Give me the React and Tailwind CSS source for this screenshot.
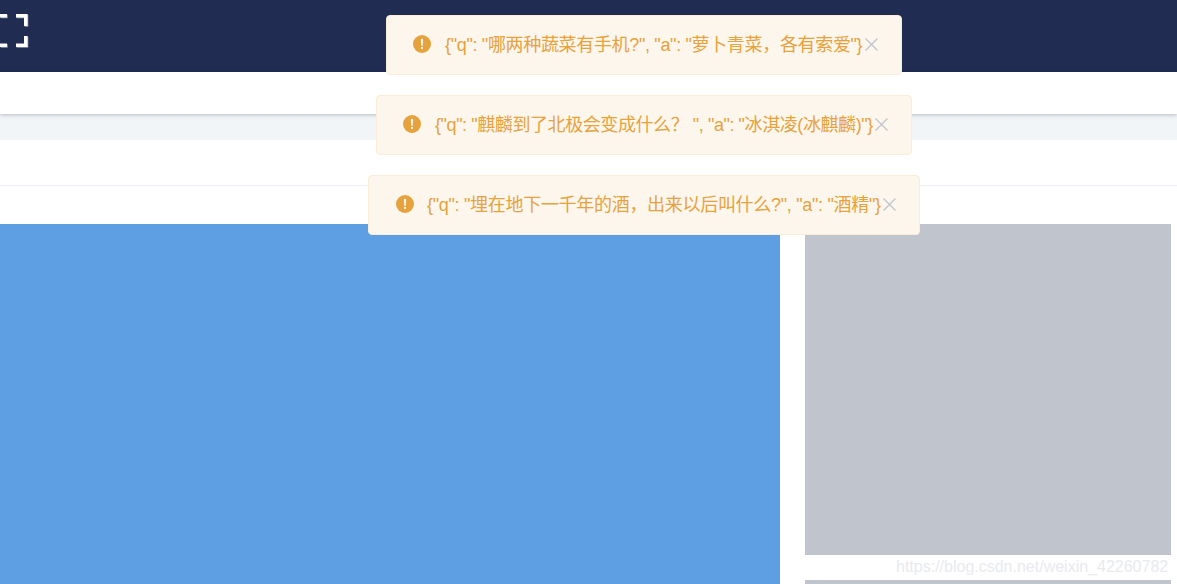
const STACK = "font-['Liberation_Sans','Noto_Sans_CJK_SC',sans-serif]";

function Warn() {
  return (
    <svg viewBox="0 0 18 18" className="w-[18px] h-[18px] shrink-0 mb-[2px]">
      <circle cx="9" cy="9" r="9" fill="#e6a23c" />
      <path d="M7.8 5 a1.2 1.2 0 0 1 2.4 0 L9.7 10.4 a0.7 0.7 0 0 1 -1.4 0 Z" fill="#fdf6ec" />
      <circle cx="9" cy="13" r="1.15" fill="#fdf6ec" />
    </svg>
  );
}

function Close() {
  return (
    <svg viewBox="0 0 13 13" className="w-[13px] h-[13px] shrink-0 mb-[1px]">
      <path d="M0.5 0.5 L12.5 12.5 M12.5 0.5 L0.5 12.5" stroke="#c0c4cc" strokeWidth="1.3" fill="none" />
    </svg>
  );
}

function Toast({ box, track, text }) {
  return (
    <div className={`absolute flex items-center h-[60px] bg-[#fdf6ec] border border-[#faecd8] rounded-[4px] pr-[23px] ${box}`}>
      <Warn />
      <span className={`text-[#e6a23c] text-[18px] whitespace-pre ${track}`}>{text}</span>
      <span className="ml-auto flex"><Close /></span>
    </div>
  );
}

export default function App() {
  return (
    <div className={`relative w-full h-[584px] overflow-hidden bg-white ${STACK}`}>
      <header className="h-[72px] bg-[#202c52] flex items-start pt-[14px]">
        <svg viewBox="0 0 29 34" className="w-[29px] h-[34px]">
          <path d="M0 1.8 H7 M0 31.2 H7 M16 1.8 H25.8 V12 M16 31.2 H25.8 V22" stroke="#8f95a8" strokeWidth="3.6" fill="none" transform="translate(0.7 0.7)" />
          <path d="M0 1.8 H7 M0 31.2 H7 M16 1.8 H25.8 V12 M16 31.2 H25.8 V22" stroke="#fff" strokeWidth="3.6" fill="none" />
        </svg>
      </header>
      <div className="relative h-[42px] bg-white shadow-[0_1px_4px_rgba(0,21,41,0.25)]" />
      <div className="h-[26px] bg-[#f2f5f8]" />
      <div className="h-[46px] bg-white border-b border-[#ebeef5]" />
      <div className="h-[38px] bg-white" />
      <div className="flex gap-[25px]">
        <div className="w-[780px] h-[360px] bg-[#5e9fe3]" />
        <div className="w-[366px] flex flex-col gap-[25px]">
          <div className="h-[331px] bg-[#c0c4cc]" />
          <div className="h-[331px] bg-[#c0c4cc]" />
        </div>
      </div>
      <Toast
        box="top-[15px] left-[386px] w-[516px] pl-[26px]"
        track="ml-[14px] tracking-[-0.33px]"
        text={'{"q": "哪两种蔬菜有手机?", "a": "萝卜青菜，各有索爱"}'}
      />
      <Toast
        box="top-[95px] left-[376px] w-[536px] pl-[26px]"
        track="ml-[14px] tracking-[-0.42px]"
        text={'{"q": "麒麟到了北极会变成什么？ ", "a": "冰淇凌(冰麒麟)"}'}
      />
      <Toast
        box="top-[175px] left-[368px] w-[552px] pl-[27px]"
        track="ml-[13px] tracking-[-0.3px]"
        text={'{"q": "埋在地下一千年的酒，出来以后叫什么?", "a": "酒精"}'}
      />
      <span className="absolute left-[896px] top-[555px] text-[16px] text-[#e8eaee] whitespace-nowrap">https://blog.csdn.net/weixin_42260782</span>
    </div>
  );
}
